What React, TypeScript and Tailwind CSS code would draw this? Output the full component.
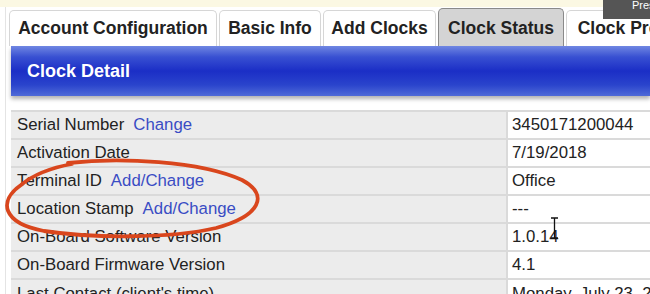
import React from 'react';

const tabs = [
  { label: 'Account Configuration', w: 'w-[208px]' },
  { label: 'Basic Info', w: 'w-[102px]' },
  { label: 'Add Clocks', w: 'w-[113px]' },
  { label: 'Clock Status', w: 'w-[126px]', active: true },
  { label: 'Clock Profiles', w: 'w-[140px]' },
];

const rows: { label: string; link?: string; value: string }[] = [
  { label: 'Serial Number', link: 'Change', value: '3450171200044' },
  { label: 'Activation Date', value: '7/19/2018' },
  { label: 'Terminal ID', link: 'Add/Change', value: 'Office' },
  { label: 'Location Stamp', link: 'Add/Change', value: '---' },
  { label: 'On-Board Software Version', value: '1.0.14' },
  { label: 'On-Board Firmware Version', value: '4.1' },
  { label: "Last Contact (client's time)", value: 'Monday, July 23, 2018' },
];

const App: React.FC = () => {
  return (
    <div className="relative w-[650px] h-[294px] overflow-hidden bg-white font-['Liberation_Sans',Arial,sans-serif] text-[#222]">
      <div className="h-[7px] bg-[#fbf8e3]" />

      <div className="ml-[5px] border-l border-[#e4e4e4] pl-[3px] pt-[1px]">
        <div className="flex items-end gap-[2px] h-[38px] whitespace-nowrap">
          {tabs.map((t) => (
            <div
              key={t.label}
              className={`${t.w} shrink-0 flex items-center justify-center text-[17.5px] font-bold rounded-t-[5px] border border-b-0 ${
                t.active ? 'h-[38px] bg-[#d4d4d4] border-[#8a8a8a] pt-[2px]' : 'h-[36px] bg-white border-[#d6d6d6]'
              }`}
            >
              {t.label}
            </div>
          ))}
        </div>

        <div className="ml-[2px] h-[50px] flex items-center pl-[16px] text-white text-[18px] font-bold bg-[linear-gradient(to_bottom,#7087e2_0%,#3850d2_22%,#1b2ec6_50%,#2a44cc_78%,#506bd8_100%)] shadow-[0_3px_4px_rgba(0,0,0,0.3)]">
          Clock Detail
        </div>

        <table className="ml-[2px] mt-[14px] w-[700px] table-fixed border-collapse text-[16.8px]">
          <colgroup>
            <col className="w-[496px]" />
            <col />
          </colgroup>
          <tbody>
            {rows.map((r) => (
              <tr key={r.label} className="h-[28px] border-t-2 border-[#dadada]">
                <td className="bg-[#ececec] pl-[6px] whitespace-nowrap border-r-2 border-[#dadada]">
                  {r.label}
                  {r.link && <span className="ml-[9px] text-[#3a4cc4]">{r.link}</span>}
                </td>
                <td className="bg-white pl-[4px] whitespace-nowrap overflow-hidden">{r.value}</td>
              </tr>
            ))}
          </tbody>
        </table>
      </div>

      <div className="absolute top-0 right-0 w-[47px] h-[19px] bg-[#555] overflow-hidden">
        <span className="absolute left-[29px] -top-[3px] text-[11px] text-white whitespace-nowrap">Presenting</span>
      </div>

      <svg className="absolute inset-0 pointer-events-none" width="650" height="294">
        <path
          d="M68 163 C 120 157, 200 161, 242 180 C 270 195, 260 216, 216 228 C 170 239, 90 238, 44 231 C 2 223, -2 201, 21 185 C 33 175, 50 168, 72 164"
          fill="none"
          stroke="#d9461d"
          strokeWidth="3.8"
          strokeLinecap="round"
        />
        <g stroke="#111" strokeWidth="1.3" fill="none">
          <path d="M551 218 h7 M554.5 218 v20 M551 238 h7" />
        </g>
      </svg>
    </div>
  );
};

export default App;
